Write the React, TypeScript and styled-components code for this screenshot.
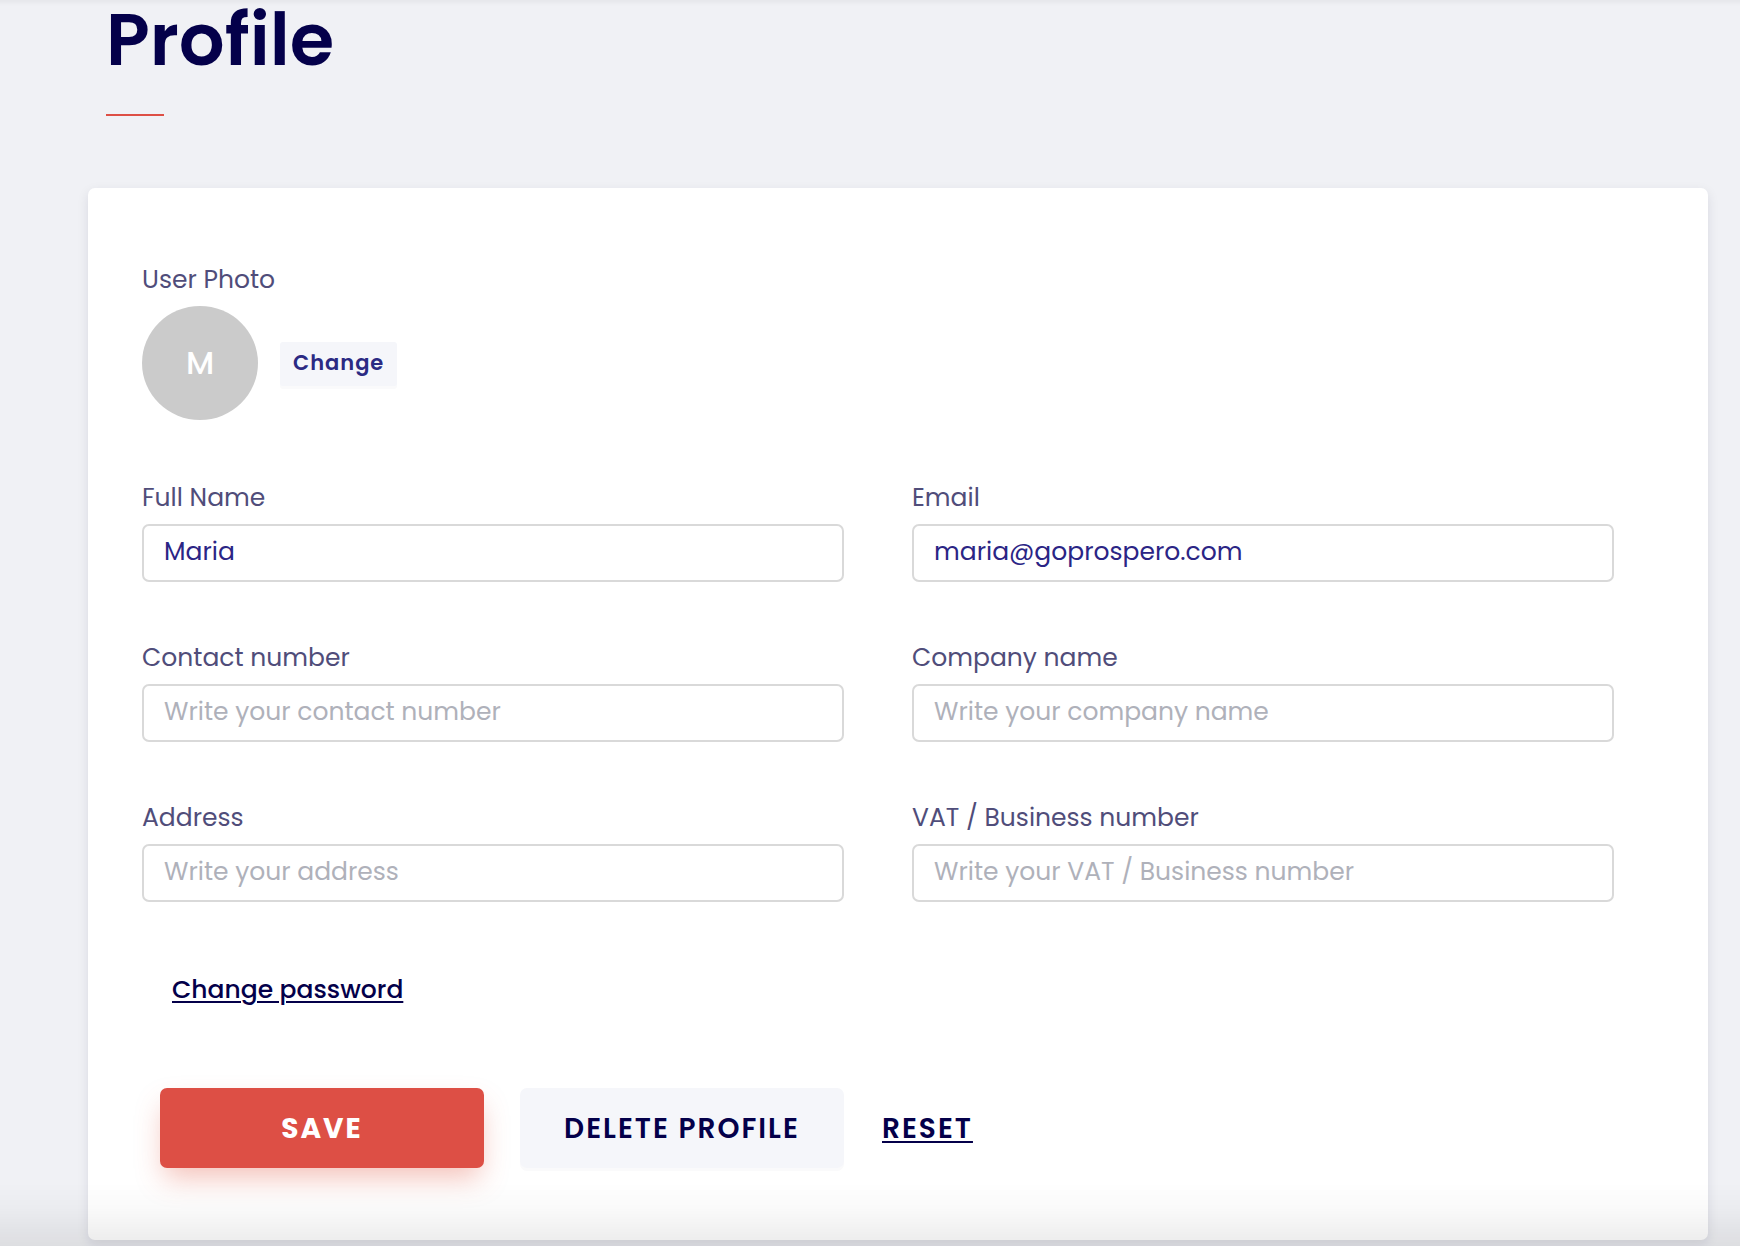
import React from "react";
import styled, { createGlobalStyle, css } from "styled-components";

const GlobalStyle = createGlobalStyle`
  *, *::before, *::after { box-sizing: border-box; }
  body {
    margin: 0;
    background: #f0f1f5;
    color: #04004a;
    font-family: Poppins, Inter, sans-serif;
  }
  button, input { font-family: inherit; }
`;

const Page = styled.main`
  display: flow-root;
  min-height: 100vh;
  padding: 0 32px 6px 88px;
`;

const ScrollShade = styled.div<{ $edge: "top" | "bottom" }>`
  position: fixed;
  left: 0;
  right: 0;
  pointer-events: none;
  ${({ $edge }) =>
    $edge === "top"
      ? css`
          top: 0;
          height: 6px;
          background: linear-gradient(rgba(0, 0, 0, 0.04), rgba(0, 0, 0, 0));
        `
      : css`
          bottom: 0;
          height: 64px;
          background: linear-gradient(
            rgba(0, 0, 0, 0),
            rgba(0, 0, 0, 0.02) 40%,
            rgba(0, 0, 0, 0.08)
          );
        `}
`;

const Header = styled.header`
  padding-left: 18px;
`;

const Title = styled.h1`
  margin: 0;
  font-size: 72px;
  line-height: 80px;
  font-weight: 600;

  &::after {
    content: "";
    display: block;
    width: 58px;
    height: 2px;
    margin-top: 34px;
    background: #dd4f45;
  }
`;

const Card = styled.form`
  margin-top: 72px;
  padding: 74px 94px 72px 54px;
  border-radius: 7px;
  background: #fff;
  box-shadow: 0 4px 12px rgba(20, 20, 60, 0.1);
`;

const labelText = css`
  display: block;
  margin: 0 0 8px;
  font-size: 25px;
  line-height: 36px;
  font-weight: 400;
  color: #504d7a;
`;

const Label = styled.label`
  ${labelText}
`;

const PhotoLabel = styled.p`
  ${labelText}
`;

const PhotoRow = styled.div`
  display: flex;
  align-items: center;
  gap: 22px;
  margin-bottom: 60px;
`;

const Avatar = styled.div`
  display: flex;
  align-items: center;
  justify-content: center;
  width: 116px;
  height: 114px;
  border-radius: 50%;
  background: #cbcbcb;
  color: #fff;
  font-size: 32px;
  font-weight: 500;
`;

const ChangeButton = styled.button`
  height: 44px;
  margin-top: 2px;
  padding: 0 13px 4px;
  border: 0;
  border-radius: 3px;
  background: #f5f6fa;
  box-shadow: 0 3px 0 #fafafb;
  color: #2b2a83;
  font-size: 21px;
  font-weight: 600;
  letter-spacing: 1px;
`;

const Fields = styled.div`
  display: grid;
  grid-template-columns: repeat(2, minmax(0, 1fr));
  gap: 58px 68px;
`;

const Input = styled.input`
  display: block;
  width: 100%;
  height: 58px;
  padding: 0 20px 2px;
  border: 2px solid #d9d9d9;
  border-radius: 7px;
  background: #fff;
  color: #2b2585;
  font-size: 25px;

  &::placeholder {
    color: #afb1ba;
    opacity: 1;
  }
`;

const PasswordLine = styled.div`
  margin: 70px 0 80px 30px;
  font-size: 25px;
  line-height: 36px;
`;

const PasswordLink = styled.a`
  color: #04004a;
  font-weight: 500;
  text-decoration: underline 2px;
  text-underline-offset: 3px;
`;

const Actions = styled.div`
  display: flex;
  gap: 36px;
  padding-left: 18px;
`;

const ActionButton = styled.button<{ $kind: "primary" | "soft" | "plain" }>`
  height: 80px;
  padding: 2px 2px 0;
  border: 0;
  border-radius: 7px;
  font-size: 28px;
  font-weight: 600;
  letter-spacing: 2px;
  text-transform: uppercase;
  color: #04004a;
  ${({ $kind }) =>
    $kind === "primary"
      ? css`
          width: 324px;
          background: #dd4f45;
          color: #fff;
          font-weight: 700;
          box-shadow: 0 14px 28px -4px rgba(225, 85, 65, 0.36);
        `
      : $kind === "soft"
        ? css`
            width: 324px;
            background: #f5f6fa;
            box-shadow: 0 3px 0 #fafafb;
          `
        : css`
            background: none;
            text-decoration: underline 2px;
            text-underline-offset: 3px;
          `}
`;

const fields = [
  { id: "fullName", label: "Full Name", type: "text", value: "Maria", hint: "" },
  { id: "email", label: "Email", type: "email", value: "maria@goprospero.com", hint: "" },
  { id: "contact", label: "Contact number", type: "tel", value: "", hint: "Write your contact number" },
  { id: "company", label: "Company name", type: "text", value: "", hint: "Write your company name" },
  { id: "address", label: "Address", type: "text", value: "", hint: "Write your address" },
  { id: "vat", label: "VAT / Business number", type: "text", value: "", hint: "Write your VAT / Business number" },
];

export default function App() {
  return (
    <>
      <GlobalStyle />
      <Page>
        <Header>
          <Title>Profile</Title>
        </Header>
        <Card onSubmit={(event) => event.preventDefault()}>
          <PhotoLabel>User Photo</PhotoLabel>
          <PhotoRow>
            <Avatar>M</Avatar>
            <ChangeButton type="button">Change</ChangeButton>
          </PhotoRow>
          <Fields>
            {fields.map((field) => (
              <div key={field.id}>
                <Label htmlFor={field.id}>{field.label}</Label>
                <Input
                  id={field.id}
                  name={field.id}
                  type={field.type}
                  defaultValue={field.value}
                  placeholder={field.hint}
                />
              </div>
            ))}
          </Fields>
          <PasswordLine>
            <PasswordLink href="#password">Change password</PasswordLink>
          </PasswordLine>
          <Actions>
            <ActionButton type="submit" $kind="primary">Save</ActionButton>
            <ActionButton type="button" $kind="soft">Delete profile</ActionButton>
            <ActionButton type="reset" $kind="plain">Reset</ActionButton>
          </Actions>
        </Card>
      </Page>
      <ScrollShade $edge="top" />
      <ScrollShade $edge="bottom" />
    </>
  );
}
